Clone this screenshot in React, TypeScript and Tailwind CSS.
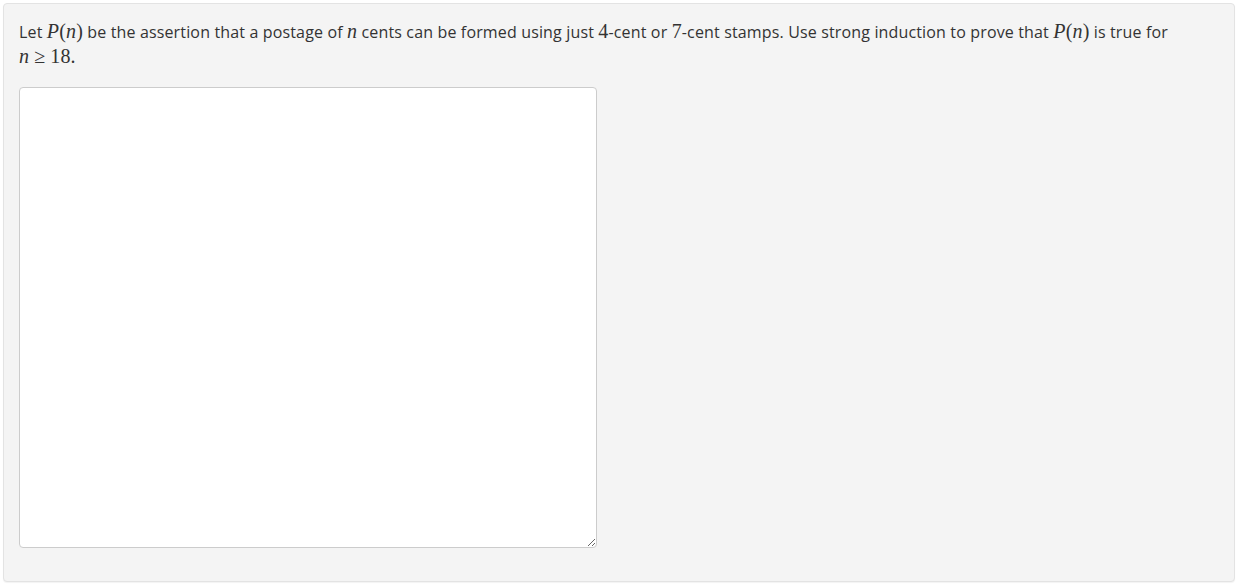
import React from 'react';

const M = ({ children }: { children: React.ReactNode }) => (
  <span className="italic text-[20px] leading-none" style={{ fontFamily: '"Liberation Serif", "DejaVu Serif", serif' }}>{children}</span>
);
const R = ({ children }: { children: React.ReactNode }) => (
  <span className="text-[20px] leading-none" style={{ fontFamily: '"Liberation Serif", "DejaVu Serif", serif' }}>{children}</span>
);

export default function App() {
  return (
    <div className="w-[1241px] h-[588px] bg-white p-[3px]" style={{ fontFamily: '"Open Sans", "Noto Sans", sans-serif' }}>
      <div className="w-[1232px] h-[579px] bg-[#f4f4f4] border border-[#e3e3e3] rounded-[4px] shadow-[0_1px_1px_rgba(0,0,0,0.05)] px-[15px] pt-[16px]">
        <p className="text-[16px] leading-[25px] text-[#333] tracking-[0.15px]">
          Let <M>P</M><R>(</R><M>n</M><R>)</R> be the assertion that a postage of <M>n</M> cents can be formed using just <R>4</R>-cent or <R>7</R>-cent stamps. Use strong induction to prove that <M>P</M><R>(</R><M>n</M><R>)</R> is true for
          <br />
          <M>n</M><R><span className="mx-[5px]">≥</span>18.</R>
        </p>
        <textarea className="block mt-[17px] w-[578px] h-[461px] bg-white border border-[#ccc] rounded-[4px] resize outline-none" />
      </div>
    </div>
  );
}
